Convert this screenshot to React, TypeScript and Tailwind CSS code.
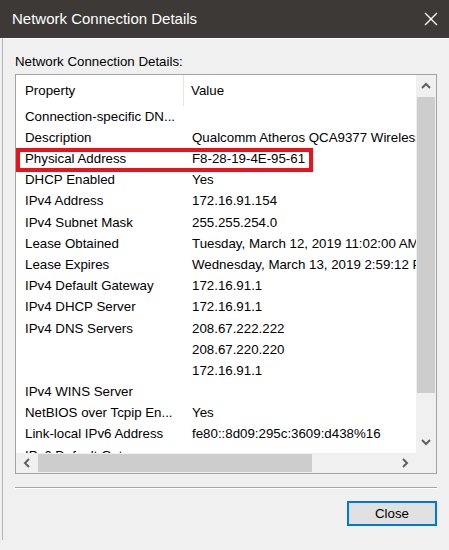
import React from "react";

const rows: [string, string][] = [
  ["Connection-specific DN...", ""],
  ["Description", "Qualcomm Atheros QCA9377 Wireless Network Adapter"],
  ["Physical Address", "F8-28-19-4E-95-61"],
  ["DHCP Enabled", "Yes"],
  ["IPv4 Address", "172.16.91.154"],
  ["IPv4 Subnet Mask", "255.255.254.0"],
  ["Lease Obtained", "Tuesday, March 12, 2019 11:02:00 AM"],
  ["Lease Expires", "Wednesday, March 13, 2019 2:59:12 PM"],
  ["IPv4 Default Gateway", "172.16.91.1"],
  ["IPv4 DHCP Server", "172.16.91.1"],
  ["IPv4 DNS Servers", "208.67.222.222"],
  ["", "208.67.220.220"],
  ["", "172.16.91.1"],
  ["IPv4 WINS Server", ""],
  ["NetBIOS over Tcpip En...", "Yes"],
  ["Link-local IPv6 Address", "fe80::8d09:295c:3609:d438%16"],
  ["IPv6 Default Gateway", ""],
];

const Chevron = ({ dir }: { dir: "up" | "down" | "left" | "right" }) => {
  const d = {
    up: "M1 6 L5 2 L9 6",
    down: "M1 2 L5 6 L9 2",
    left: "M6 1 L2 5 L6 9",
    right: "M2 1 L6 5 L2 9",
  }[dir];
  const vertical = dir === "up" || dir === "down";
  return (
    <svg
      width={vertical ? 10 : 8}
      height={vertical ? 8 : 10}
      viewBox={vertical ? "0 0 10 8" : "0 0 8 10"}
      fill="none"
      stroke="#606060"
      strokeWidth="2"
    >
      <path d={d} />
    </svg>
  );
};

export default function App() {
  return (
    <div className="flex h-[550px] w-[449px] flex-col bg-[#f0f0f0] font-['Liberation_Sans',Arial,sans-serif] text-[13.3px] text-black">
      {/* title bar */}
      <div className="flex h-[38px] shrink-0 items-center justify-between bg-[#3c3937] pl-[12px] pr-[11px]">
        <span className="text-[15px] text-white">Network Connection Details</span>
        <svg width="14" height="14" viewBox="0 0 14 14" stroke="#ffffff" strokeWidth="1.4">
          <path d="M1 1 L13 13 M13 1 L1 13" />
        </svg>
      </div>

      <div className="ml-[2px] flex h-[502px] flex-col border-l border-t border-l-[#b4b4b4] border-t-[#fafafa] pl-[12px] pr-[12px] pt-[15px]">
        <div className="h-[16px] leading-[16px]">Network Connection Details:</div>

        {/* list view */}
        <div className="relative mt-[4px] flex h-[400px] w-[422px] flex-col border border-[#a3a3a3] bg-white">
          <div className="flex min-h-0 flex-1">
            <div className="min-w-0 flex-1 overflow-hidden">
              <div className="flex h-[31px] items-center">
                <div className="flex h-full w-[168px] shrink-0 items-center border-r border-[#e5e5e5] pl-[9px]">
                  Property
                </div>
                <div className="pl-[7px]">Value</div>
              </div>
              {rows.map(([k, v], i) => (
                <div key={i} className="flex h-[21.2px] items-center whitespace-nowrap">
                  <div className="w-[169px] shrink-0 pl-[9px]">{k}</div>
                  <div className="pl-[7px]">{v}</div>
                </div>
              ))}
            </div>
            <div className="flex w-[20px] shrink-0 flex-col bg-[#f0f0f0]">
              <div className="flex h-[22px] items-center justify-center">
                <Chevron dir="up" />
              </div>
              <div className="mx-[1px] h-[296px] bg-[#cdcdcd]" />
              <div className="flex-1" />
              <div className="flex h-[22px] items-center justify-center">
                <Chevron dir="down" />
              </div>
            </div>
          </div>
          <div className="flex h-[20px] shrink-0 bg-[#f0f0f0]">
            <div className="flex w-[22px] items-center justify-center">
              <Chevron dir="left" />
            </div>
            <div className="my-[1px] w-[274px] bg-[#cdcdcd]" />
            <div className="flex-1" />
            <div className="flex w-[22px] items-center justify-center">
              <Chevron dir="right" />
            </div>
            <div className="w-[20px]" />
          </div>
          <div className="absolute left-0 top-[73px] h-[24px] w-[297px] border-4 border-[#e8131b]" />
        </div>

        <div className="mt-[13px] border-t border-b border-t-[#a6a6a6] border-b-white" />

        <button className="mt-[12px] flex h-[25px] w-[90px] items-center justify-center self-end border-2 border-[#0078d7] bg-[#e1e1e1] text-[13.3px]">
          Close
        </button>
      </div>
    </div>
  );
}
